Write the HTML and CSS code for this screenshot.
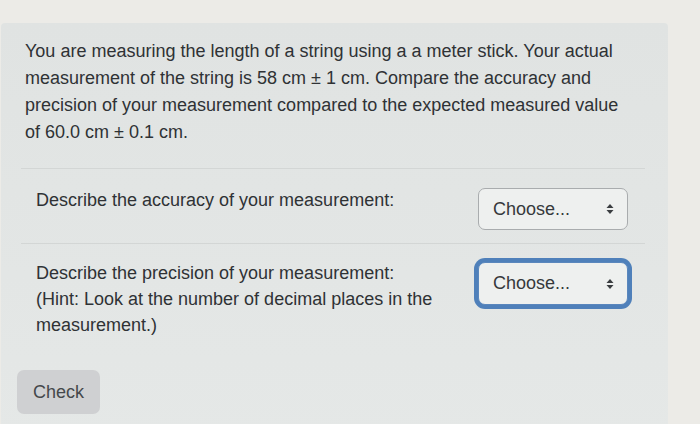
FILE: index.html
```html
<!DOCTYPE html>
<html>
<head>
<meta charset="utf-8">
<link rel="stylesheet" href="styles.css">
</head>
<body>
<div class="panel">
  <p class="question">You are measuring the length of a string using a a meter stick. Your actual measurement of the string is 58 cm ± 1 cm. Compare the accuracy and precision of your measurement compared to the expected measured value of 60.0 cm ± 0.1 cm.</p>
  <div class="row row-first">
    <div class="label">Describe the accuracy of your measurement:</div>
    <div class="select"><span>Choose...</span><svg class="arrows" width="8" height="12" viewBox="0 0 8 12"><path d="M4 1 L7.5 5 H0.5 Z M4 11 L7.5 7 H0.5 Z" fill="#3a3d40"/></svg></div>
  </div>
  <div class="row row-second">
    <div class="label">Describe the precision of your measurement:<br>(Hint: Look at the number of decimal places in the measurement.)</div>
    <div class="select focus"><span>Choose...</span><svg class="arrows" width="8" height="12" viewBox="0 0 8 12"><path d="M4 1 L7.5 5 H0.5 Z M4 11 L7.5 7 H0.5 Z" fill="#3a3d40"/></svg></div>
  </div>
  <button class="check">Check</button>
</div>
</body>
</html>
```

FILE: styles.css
```css
html, body {
  margin: 0;
  padding: 0;
}
body {
  background: #ecebe7;
  font-family: "Liberation Sans", Arial, sans-serif;
  color: #2f3235;
  width: 700px;
  height: 424px;
  overflow: hidden;
}
.panel {
  margin: 23px 0 0 1px;
  width: 667px;
  height: 420px;
  box-sizing: border-box;
  background: linear-gradient(180deg, #e0e3e2 0%, #e5e8e7 100%);
  border-radius: 4px 4px 0 0;
  padding: 15px 23px 0 16px;
}
.question {
  margin: 0 0 0 4px;
  padding: 0 14px 22px 4px;
  font-size: 18px;
  line-height: 27px;
  border-bottom: 1px solid #d3d6d5;
}
.row {
  display: flex;
  justify-content: space-between;
  align-items: flex-start;
  margin-left: 4px;
  padding: 0 17px 0 15px;
  font-size: 18px;
}
.row-first {
  padding-top: 18px;
  height: 56px;
  border-bottom: 1px solid #d3d6d5;
}
.row-first .label {
  line-height: 26px;
}
.row-second {
  padding-top: 16px;
}
.row-second .label {
  line-height: 26px;
  width: 420px;
}
.select {
  width: 150px;
  height: 42px;
  box-sizing: border-box;
  border: 1px solid #a9acae;
  border-radius: 7px;
  background: #eef0ef;
  display: flex;
  align-items: center;
  justify-content: space-between;
  padding: 0 13px 0 14px;
  font-size: 18px;
  color: #36393c;
  margin-top: 1px;
}
.select.focus {
  margin-top: 2px;
  height: 43px;
  border-color: #5a87bd;
  box-shadow: 0 0 0 4px #4f80ba;
}
.check {
  display: block;
  margin-top: 32px;
  margin-left: 0;
  width: 83px;
  height: 44px;
  border: none;
  border-radius: 7px;
  background: #cfd0d2;
  color: #45484b;
  font-family: "Liberation Sans", Arial, sans-serif;
  font-size: 18px;
  padding: 0;
}
```
